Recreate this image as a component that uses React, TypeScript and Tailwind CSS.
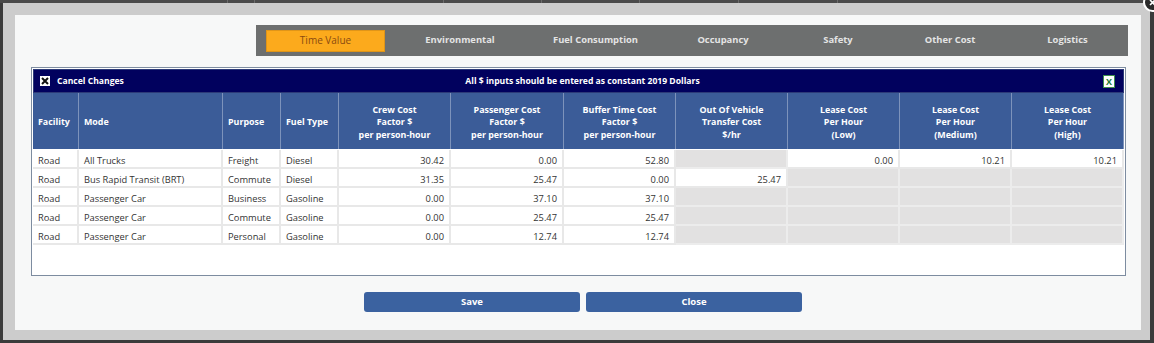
import React from "react";

type Row = {
  facility: string;
  mode: string;
  purpose: string;
  fuel: string;
  crew: string;
  passenger: string;
  buffer: string;
  transfer: string | null;
  low: string | null;
  medium: string | null;
  high: string | null;
};

const tabs = [
  { label: "Time Value", w: "w-[136px]" },
  { label: "Environmental", w: "w-[136px]" },
  { label: "Fuel Consumption", w: "w-[135px]" },
  { label: "Occupancy", w: "w-[120px]" },
  { label: "Safety", w: "w-[110px]" },
  { label: "Other Cost", w: "w-[114px]" },
  { label: "Logistics", w: "w-[121px]" },
];

const headers: { lines: string[]; left?: boolean }[] = [
  { lines: ["Facility"], left: true },
  { lines: ["Mode"], left: true },
  { lines: ["Purpose"], left: true },
  { lines: ["Fuel Type"], left: true },
  { lines: ["Crew Cost", "Factor $", "per person-hour"] },
  { lines: ["Passenger Cost", "Factor $", "per person-hour"] },
  { lines: ["Buffer Time Cost", "Factor $", "per person-hour"] },
  { lines: ["Out Of Vehicle", "Transfer Cost", "$/hr"] },
  { lines: ["Lease Cost", "Per Hour", "(Low)"] },
  { lines: ["Lease Cost", "Per Hour", "(Medium)"] },
  { lines: ["Lease Cost", "Per Hour", "(High)"] },
];

const rows: Row[] = [
  { facility: "Road", mode: "All Trucks", purpose: "Freight", fuel: "Diesel", crew: "30.42", passenger: "0.00", buffer: "52.80", transfer: null, low: "0.00", medium: "10.21", high: "10.21" },
  { facility: "Road", mode: "Bus Rapid Transit (BRT)", purpose: "Commute", fuel: "Diesel", crew: "31.35", passenger: "25.47", buffer: "0.00", transfer: "25.47", low: null, medium: null, high: null },
  { facility: "Road", mode: "Passenger Car", purpose: "Business", fuel: "Gasoline", crew: "0.00", passenger: "37.10", buffer: "37.10", transfer: null, low: null, medium: null, high: null },
  { facility: "Road", mode: "Passenger Car", purpose: "Commute", fuel: "Gasoline", crew: "0.00", passenger: "25.47", buffer: "25.47", transfer: null, low: null, medium: null, high: null },
  { facility: "Road", mode: "Passenger Car", purpose: "Personal", fuel: "Gasoline", crew: "0.00", passenger: "12.74", buffer: "12.74", transfer: null, low: null, medium: null, high: null },
];

const cols =
  "grid grid-cols-[46px_144px_58px_58px_112px_113px_112px_112px_112px_112px_112px]";

function TextCell({ children }: { children: React.ReactNode }) {
  return (
    <div className="h-[19px] whitespace-nowrap border-r-2 border-b-2 border-[#e8e8e8] bg-white pl-[5px] pt-[4px] text-[9.3px] leading-[13px] text-[#333]">
      {children}
    </div>
  );
}

function NumCell({ value }: { value: string | null }) {
  if (value === null)
    return <div className="h-[19px] border-r-2 border-b-2 border-[#ececec] bg-[#e2e1e1]" />;
  return (
    <div className="h-[19px] border-r-2 border-b-2 border-[#e8e8e8] bg-white pr-[5px] pt-[4px] text-right text-[9.3px] leading-[13px] text-[#333]">
      {value}
    </div>
  );
}

export default function App() {
  return (
    <div
      className="relative h-[343px] w-[1154px] overflow-hidden bg-[#3b3b3b]"
      style={{ fontFamily: '"Open Sans", "Noto Sans", sans-serif' }}
    >
      {/* page behind the dialog */}
      <div className="flex h-[3px] bg-[#4a4a4a]">
        <div className="w-[227px]" />
        <div className="w-[27px] border-l border-[#6a6a6a]" />
        <div className="w-[189px] border-l border-[#6a6a6a]" />
        <div className="w-[98px] border-l border-[#6a6a6a]" />
        <div className="w-[98px] border-l border-[#6a6a6a]" />
        <div className="w-[99px] border-l border-[#6a6a6a]" />
        <div className="w-[99px] border-l border-[#6a6a6a]" />
        <div className="w-[99px] border-l border-[#6a6a6a]" />
      </div>

      <div className="ml-[3px] mr-[4px] bg-[#cccccc] pt-[12px] pl-[12px] pr-[9px] pb-[10px]">
        <div className="h-[315px] bg-[#f7f8f8] pt-[10px]">
          {/* tabs */}
          <div className="ml-[241px] flex h-[31px] w-[872px] items-center bg-[#6d6f6f]">
            {tabs.map((t, i) =>
              i === 0 ? (
                <div key={t.label} className={`${t.w} flex h-full items-center pl-[10px]`}>
                  <div className="flex h-[22px] w-[119px] items-center justify-center border border-[#e09518] bg-[#fcaa1c] text-[10px] text-[#8a4a10]">
                    {t.label}
                  </div>
                </div>
              ) : (
                <div
                  key={t.label}
                  className={`${t.w} flex h-full items-center justify-center text-[9.4px] font-bold text-[#e4e4e4]`}
                >
                  {t.label}
                </div>
              )
            )}
          </div>

          {/* grid */}
          <div className="ml-[16px] mt-[11px] w-[1095px] border border-[#7d8ca0] bg-white p-[1px]">
            <div className="flex h-[24px] items-center border border-[#2c3a78] bg-[#01015e] text-[8.6px] font-bold text-white">
              <div className="flex flex-1 items-center pl-[6px]">
                <span className="flex h-[10px] w-[10px] items-center justify-center bg-white">
                  <svg width="8" height="8" viewBox="0 0 8 8">
                    <path d="M1 1L7 7M7 1L1 7" stroke="#111" strokeWidth="2" />
                  </svg>
                </span>
                <span className="ml-[7px]">Cancel Changes</span>
              </div>
              <div className="ml-[10px]">All $ inputs should be entered as constant 2019 Dollars</div>
              <div className="flex flex-1 justify-end pr-[8px]">
                <span className="flex h-[13px] w-[12px] items-center justify-center border border-[#3e8f4e] bg-white text-[9px] font-bold leading-none text-[#1d7a36]">
                  X
                </span>
              </div>
            </div>

            <div className={`${cols} h-[56px] bg-[#3b5c98]`}>
              {headers.map((h, i) => (
                <div
                  key={i}
                  className={[
                    "flex flex-col justify-center border-r border-[#7d93bb] pt-[3px] text-[8.9px] font-bold leading-[12.5px] text-white",
                    h.left ? "items-start pl-[5px]" : "items-center text-center",
                  ].join(" ")}
                >
                  {h.lines.map((l) => (
                    <span key={l}>{l}</span>
                  ))}
                </div>
              ))}
            </div>

            <div className="h-[125px] pt-[1px]">
              {rows.map((r, i) => (
                <div key={i} className={cols}>
                  <TextCell>{r.facility}</TextCell>
                  <TextCell>{r.mode}</TextCell>
                  <TextCell>{r.purpose}</TextCell>
                  <TextCell>{r.fuel}</TextCell>
                  <NumCell value={r.crew} />
                  <NumCell value={r.passenger} />
                  <NumCell value={r.buffer} />
                  <NumCell value={r.transfer} />
                  <NumCell value={r.low} />
                  <NumCell value={r.medium} />
                  <NumCell value={r.high} />
                </div>
              ))}
            </div>
          </div>

          {/* buttons */}
          <div className="ml-[349px] mt-[16px] flex gap-[6px]">
            <button className="h-[20px] w-[216px] rounded-[3px] bg-[#3b62a0] text-[9.5px] font-bold text-white">
              Save
            </button>
            <button className="h-[20px] w-[216px] rounded-[3px] bg-[#3b62a0] text-[9.5px] font-bold text-white">
              Close
            </button>
          </div>
        </div>
      </div>

      {/* dialog close badge */}
      <div className="absolute right-[-8px] top-[-7px] flex h-[19px] w-[19px] items-center justify-center rounded-full border-2 border-white bg-[#2a2a2a]">
        <svg width="7" height="7" viewBox="0 0 7 7">
          <path d="M1 1L6 6M6 1L1 6" stroke="#fff" strokeWidth="1.6" />
        </svg>
      </div>
    </div>
  );
}
